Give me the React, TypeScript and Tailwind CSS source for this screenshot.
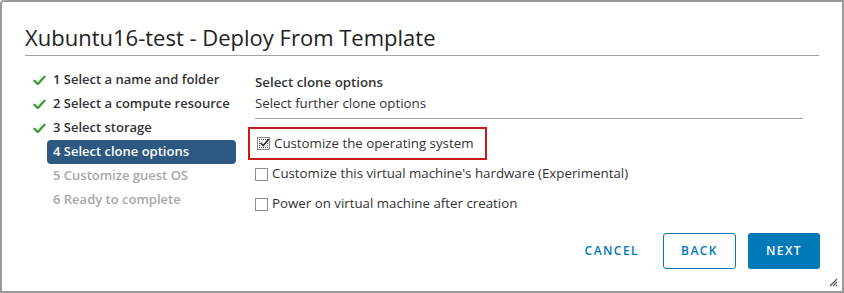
import React from "react";

const Check = () => (
  <svg width="13" height="11" viewBox="0 0 13 11" className="shrink-0">
    <path d="M1.5 5.8 L4.8 9 L11.5 1.8" fill="none" stroke="#3f9b3a" strokeWidth="2.4" strokeLinecap="round" strokeLinejoin="round" />
  </svg>
);

const Box = ({ checked }: { checked?: boolean }) => (
  <span className="relative inline-block w-[13px] h-[13px] border border-[#8c8c8c] bg-white shrink-0">
    {checked && (
      <>
        <span className="absolute inset-[1px] border border-dotted border-[#555]" />
        <svg className="absolute left-[1px] top-[0px]" width="11" height="10" viewBox="0 0 11 10">
          <path d="M1.5 4.8 L4.2 7.5 L9.8 1.2" fill="none" stroke="#333" strokeWidth="1.6" />
        </svg>
      </>
    )}
  </span>
);

export default function App() {
  const font = { fontFamily: "'Open Sans', 'Noto Sans', sans-serif" };
  const steps = [
    { n: "1 Select a name and folder", s: "done" },
    { n: "2 Select a compute resource", s: "done" },
    { n: "3 Select storage", s: "done" },
    { n: "4 Select clone options", s: "active" },
    { n: "5 Customize guest OS", s: "off" },
    { n: "6 Ready to complete", s: "off" },
  ];
  return (
    <div className="w-[844px] h-[293px] bg-white overflow-hidden" style={font}>
      <div className="relative w-full h-full border-2 border-[#9b9b9b] rounded-tl-[4px] flex flex-col">
        <div className="mx-[23px] mt-[22px] h-[32px] border-b border-[#a3a3a3] text-[22px] leading-[26px] text-[#222]">
          Xubuntu16-test - Deploy From Template
        </div>
        <div className="flex mt-[12px]">
          <div className="w-[236px] shrink-0 pl-[31px] flex flex-col whitespace-nowrap">
            {steps.map((st) =>
              st.s === "active" ? (
                <div key={st.n} className="h-[24px] ml-[14px] w-[189px] bg-[#2d5882] rounded-[4px] flex items-center pl-[6px] text-[13px] font-semibold text-white">
                  {st.n}
                </div>
              ) : (
                <div key={st.n} className="h-[24px] flex items-center text-[13px] font-semibold">
                  <span className="w-[20px] shrink-0 flex">{st.s === "done" && <Check />}</span>
                  <span className={st.s === "done" ? "text-[#333]" : "text-[#a8a8a8]"}>{st.n}</span>
                </div>
              )
            )}
          </div>
          <div className="flex-1 ml-[17px] mr-[39px] flex flex-col whitespace-nowrap">
            <div className="text-[13.3px] font-semibold text-[#333] leading-[16px] mt-[6px]">Select clone options</div>
            <div className="text-[13.3px] text-[#333] leading-[16px] mt-[5px] pb-[7px] border-b border-[#a3a3a3]">Select further clone options</div>
            <div className="mt-[8px] -ml-[7px] w-[239px] h-[33px] border-2 border-[#cc1a1a] flex items-center pl-[7px] gap-[4px] text-[13.3px] text-[#333]">
              <Box checked />
              <span>Customize the operating system</span>
            </div>
            <div className="mt-[6px] h-[16px] flex items-center gap-[4px] text-[13.3px] text-[#333]">
              <Box />
              <span>Customize this virtual machine's hardware (Experimental)</span>
            </div>
            <div className="mt-[14px] h-[16px] flex items-center gap-[4px] text-[13.3px] text-[#333]">
              <Box />
              <span>Power on virtual machine after creation</span>
            </div>
          </div>
        </div>
        <div className="flex justify-end items-center mt-auto mb-[22px] mr-[22px] gap-[12px] text-[12px] font-semibold tracking-[0.12em]">
          <button className="h-[36px] px-[12px] text-[#0079b8]">CANCEL</button>
          <button className="h-[36px] w-[73px] border border-[#0079b8] rounded-[3px] text-[#0079b8] bg-white">BACK</button>
          <button className="h-[36px] w-[72px] rounded-[3px] bg-[#0079b8] text-white">NEXT</button>
        </div>
        <svg className="absolute right-[4px] bottom-[4px]" width="9" height="9" viewBox="0 0 9 9">
          <path d="M8 1 L1 8 M8 4 L4 8 M8 7 L7 8" stroke="#555" strokeWidth="1.2" />
        </svg>
      </div>
    </div>
  );
}
